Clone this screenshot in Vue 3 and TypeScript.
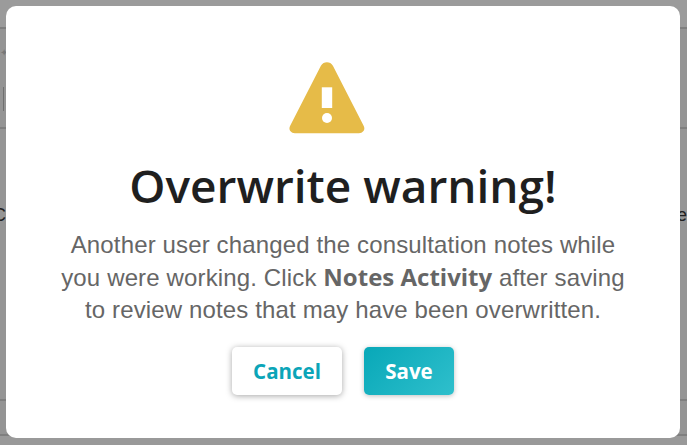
<script setup lang="ts">
const title = 'Overwrite warning!'
</script>

<template>
  <div class="page">
    <div class="backdrop">
      <div class="band top"></div>
      <div class="band middle">
        <span class="cross">✦</span>
        <span class="tick"></span>
      </div>
      <div class="band rowtext">
        <span>C</span>
        <span>ed</span>
      </div>
      <div class="band bottom"></div>
    </div>
    <div class="modal">
      <svg class="icon" width="76" height="72" viewBox="0 0 76 72" aria-hidden="true">
        <path fill="#e6bb48" d="M31.900 3.800c2.700-4.600 9.400-4.600 12 0l30.600 59.600c2.500 4.600-.8 7.900-6 7.900H7.300c-5.200 0-8.500-3.300-6-7.900z" />
        <rect x="32.800" y="25.300" width="10.400" height="20.700" fill="#fff" />
        <circle cx="38" cy="56" r="5" fill="#fff" />
      </svg>
      <h1>{{ title }}</h1>
      <p>Another user changed the consultation notes while you were working. Click <b>Notes Activity</b> after saving to review notes that may have been overwritten.</p>
      <div class="actions">
        <button class="cancel" type="button">Cancel</button>
        <button class="save" type="button">Save</button>
      </div>
    </div>
  </div>
</template>

<style>
html, body { margin: 0; padding: 0; }
</style>

<style scoped>
.page { position: relative; width: 687px; height: 445px; overflow: hidden; background: #999; }
.backdrop { display: flex; flex-direction: column; height: 445px; }
.band { box-sizing: border-box; border-bottom: 2px solid #7f7f7f; flex: none; }
.top { height: 29px; background: #9b9b9b; }
.middle { height: 100px; position: relative; background: #949494; }
.cross { position: absolute; left: 0; top: 18px; font: 10px "Liberation Sans", sans-serif; color: #777; }
.tick { position: absolute; left: 3px; top: 58px; width: 1px; height: 24px; background: #6f6f6f; }
.rowtext { height: 272px; background: #959595; display: flex; justify-content: space-between; font: 18px "Liberation Sans", sans-serif; color: #222; padding-top: 76px; margin-left: -7px; width: 704px; }
.bottom { height: 35px; background: #949494; }
.modal { position: absolute; left: 6px; top: 6px; box-sizing: border-box; width: 674px; height: 432px; background: #fff; border-radius: 10px; display: flex; flex-direction: column; align-items: center; padding-top: 56px; }
.icon { display: block; margin-right: 32px; }
h1 { margin: 20px 0 0; font: 600 46px/62px "Open Sans", sans-serif; color: #1f1f1f; }
p { margin: 13px 0 0; width: 580px; text-align: center; font: 400 24px/32px "Liberation Sans", sans-serif; letter-spacing: 0.14px; color: #666; }
b { font-family: "Open Sans", sans-serif; font-weight: 700; letter-spacing: 0; }
.actions { display: flex; gap: 22px; margin-top: 21px; }
button { height: 48px; border: 0; border-radius: 5px; font: 700 20.500px "Open Sans", sans-serif; padding: 0; }
.cancel { width: 110px; background: #fff; color: #0ba5b8; box-shadow: 0 1px 6px rgba(0,0,0,.35); }
.save { width: 90px; background: linear-gradient(135deg, #08a8b8, #2fbfcc); color: #fff; box-shadow: 0 1px 5px rgba(0,0,0,.25); }
</style>
